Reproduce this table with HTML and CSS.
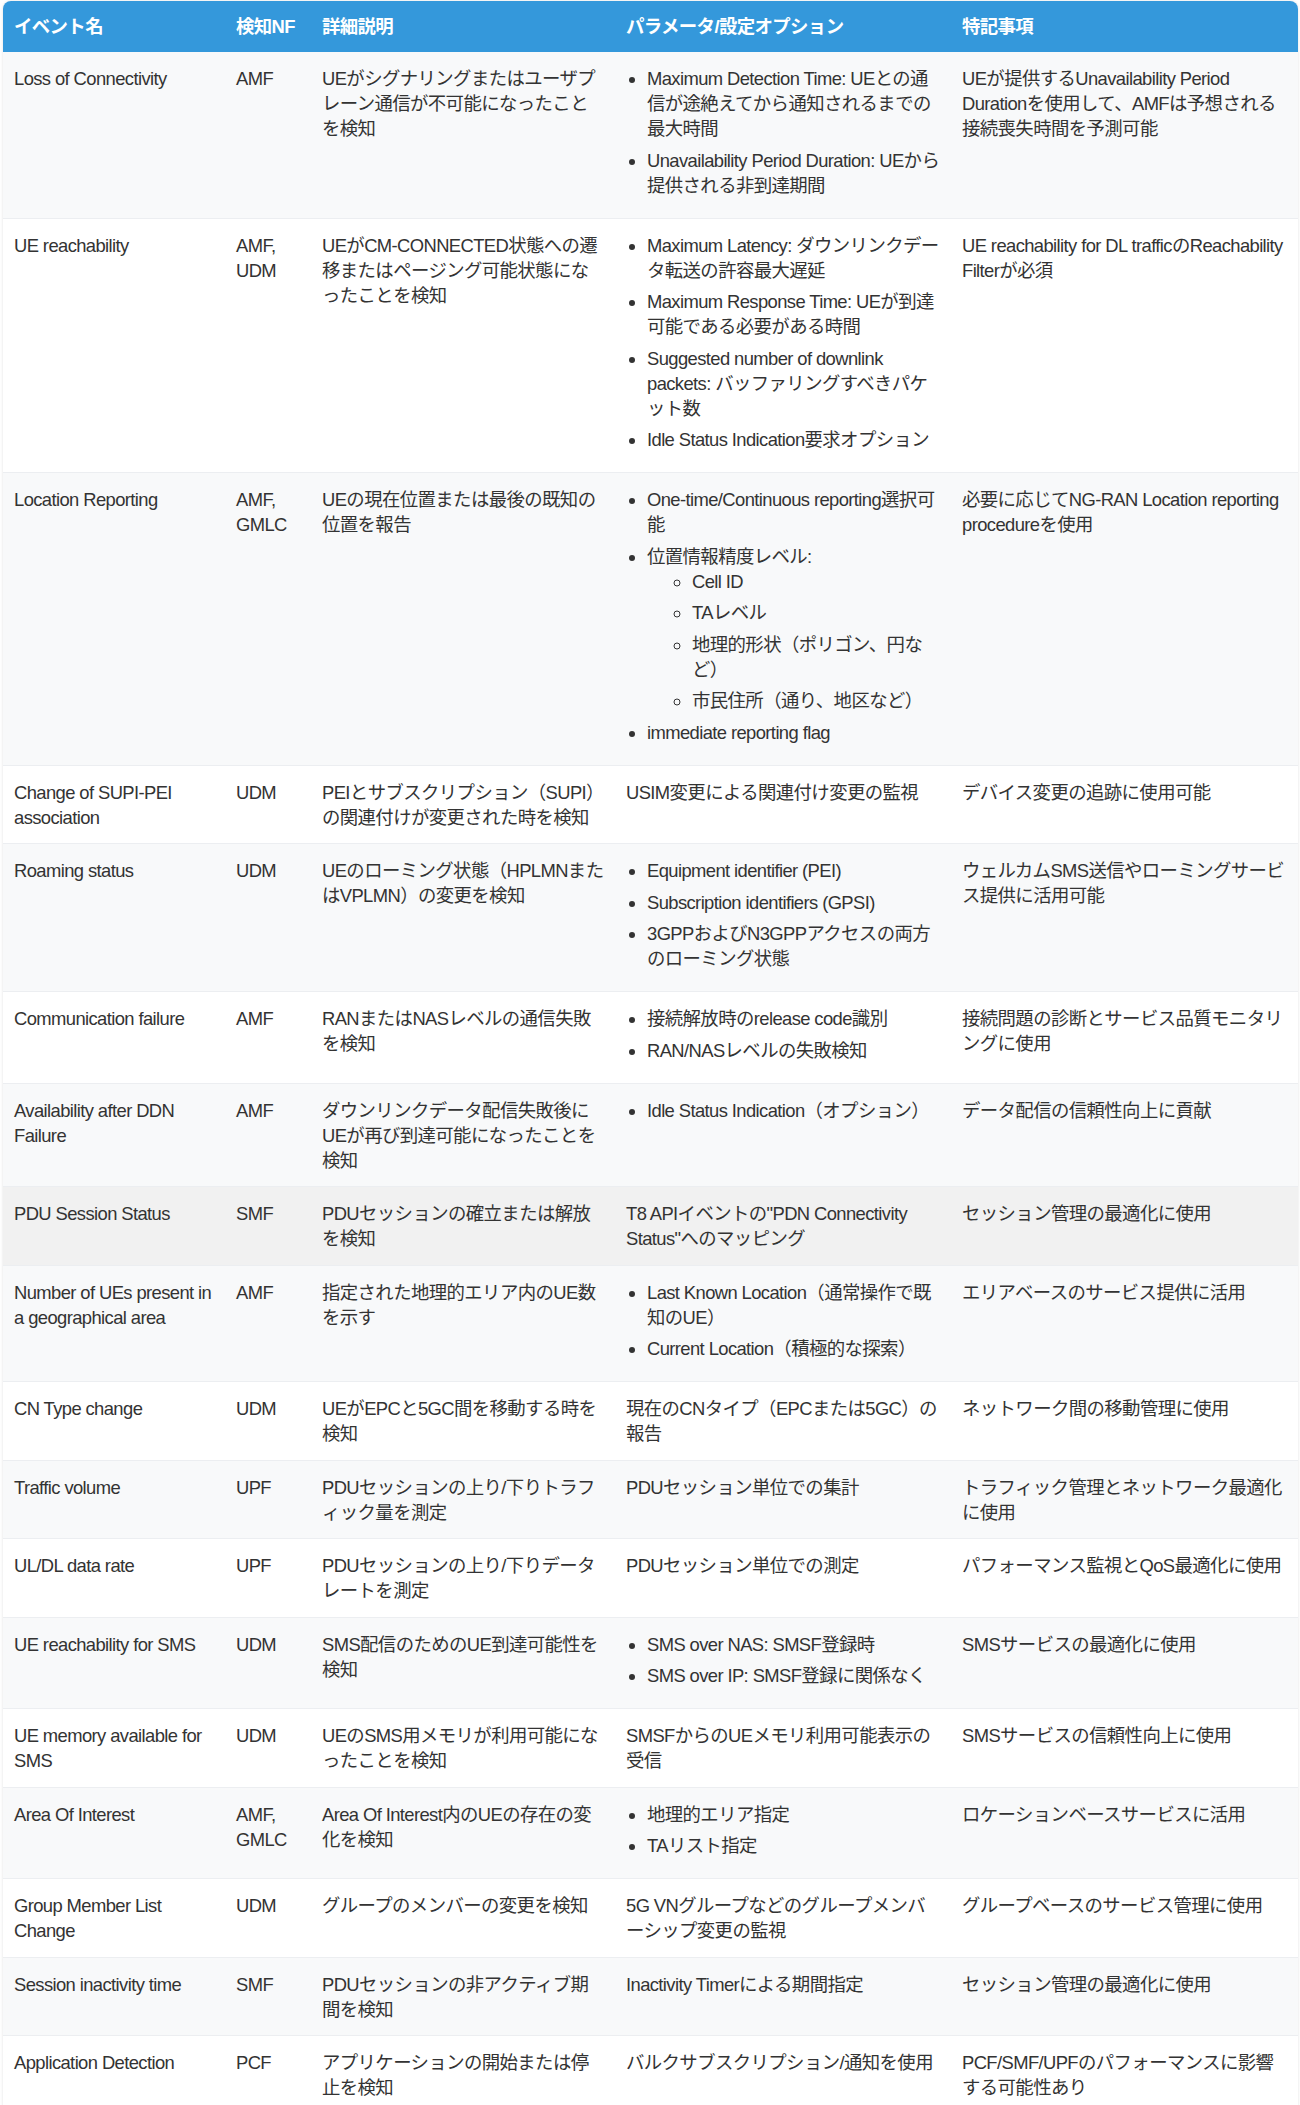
FILE: index.html
```html
<!DOCTYPE html>
<html lang="ja">
<head>
<meta charset="utf-8">
<title>イベント一覧</title>
<link rel="stylesheet" href="styles.css">
</head>
<body>
<div class="wrap">
<table class="events">
<colgroup>
<col class="c-name"><col class="c-nf"><col class="c-desc"><col class="c-param"><col class="c-note">
</colgroup>
<thead>
<tr><th>イベント名</th><th>検知NF</th><th>詳細説明</th><th>パラメータ/設定オプション</th><th>特記事項</th></tr>
</thead>
<tbody>
<tr>
<td>Loss of Connectivity</td><td>AMF</td><td>UEがシグナリングまたはユーザプレーン通信が不可能になったことを検知</td>
<td><ul class="list"><li>Maximum Detection Time: UEとの通信が途絶えてから通知されるまでの最大時間</li><li>Unavailability Period Duration: UEから提供される非到達期間</li></ul></td>
<td>UEが提供するUnavailability Period Durationを使用して、AMFは予想される接続喪失時間を予測可能</td>
</tr>
<tr>
<td>UE reachability</td><td>AMF, UDM</td><td>UEがCM-CONNECTED状態への遷移またはページング可能状態になったことを検知</td>
<td><ul class="list"><li>Maximum Latency: ダウンリンクデータ転送の許容最大遅延</li><li>Maximum Response Time: UEが到達可能である必要がある時間</li><li>Suggested number of downlink packets: バッファリングすべきパケット数</li><li>Idle Status Indication要求オプション</li></ul></td>
<td>UE reachability for DL trafficのReachability Filterが必須</td>
</tr>
<tr>
<td>Location Reporting</td><td>AMF, GMLC</td><td>UEの現在位置または最後の既知の位置を報告</td>
<td><ul class="list"><li>One-time/Continuous reporting選択可能</li><li>位置情報精度レベル:<ul class="sublist"><li>Cell ID</li><li>TAレベル</li><li>地理的形状（ポリゴン、円など）</li><li>市民住所（通り、地区など）</li></ul></li><li>immediate reporting flag</li></ul></td>
<td>必要に応じてNG-RAN Location reporting procedureを使用</td>
</tr>
<tr>
<td>Change of SUPI-PEI association</td><td>UDM</td><td>PEIとサブスクリプション（SUPI）の関連付けが変更された時を検知</td>
<td>USIM変更による関連付け変更の監視</td>
<td>デバイス変更の追跡に使用可能</td>
</tr>
<tr>
<td>Roaming status</td><td>UDM</td><td>UEのローミング状態（HPLMNまたはVPLMN）の変更を検知</td>
<td><ul class="list"><li>Equipment identifier (PEI)</li><li>Subscription identifiers (GPSI)</li><li>3GPPおよびN3GPPアクセスの両方のローミング状態</li></ul></td>
<td>ウェルカムSMS送信やローミングサービス提供に活用可能</td>
</tr>
<tr>
<td>Communication failure</td><td>AMF</td><td>RANまたはNASレベルの通信失敗を検知</td>
<td><ul class="list"><li>接続解放時のrelease code識別</li><li>RAN/NASレベルの失敗検知</li></ul></td>
<td>接続問題の診断とサービス品質モニタリングに使用</td>
</tr>
<tr>
<td>Availability after DDN Failure</td><td>AMF</td><td>ダウンリンクデータ配信失敗後にUEが再び到達可能になったことを検知</td>
<td><ul class="list"><li>Idle Status Indication（オプション）</li></ul></td>
<td>データ配信の信頼性向上に貢献</td>
</tr>
<tr class="is-hover">
<td>PDU Session Status</td><td>SMF</td><td>PDUセッションの確立または解放を検知</td>
<td>T8 APIイベントの"PDN Connectivity Status"へのマッピング</td>
<td>セッション管理の最適化に使用</td>
</tr>
<tr>
<td>Number of UEs present in a geographical area</td><td>AMF</td><td>指定された地理的エリア内のUE数を示す</td>
<td><ul class="list"><li>Last Known Location（通常操作で既知のUE）</li><li>Current Location（積極的な探索）</li></ul></td>
<td>エリアベースのサービス提供に活用</td>
</tr>
<tr>
<td>CN Type change</td><td>UDM</td><td>UEがEPCと5GC間を移動する時を検知</td>
<td>現在のCNタイプ（EPCまたは5GC）の報告</td>
<td>ネットワーク間の移動管理に使用</td>
</tr>
<tr>
<td>Traffic volume</td><td>UPF</td><td>PDUセッションの上り/下りトラフィック量を測定</td>
<td>PDUセッション単位での集計</td>
<td>トラフィック管理とネットワーク最適化に使用</td>
</tr>
<tr>
<td>UL/DL data rate</td><td>UPF</td><td>PDUセッションの上り/下りデータレートを測定</td>
<td>PDUセッション単位での測定</td>
<td>パフォーマンス監視とQoS最適化に使用</td>
</tr>
<tr>
<td>UE reachability for SMS</td><td>UDM</td><td>SMS配信のためのUE到達可能性を検知</td>
<td><ul class="list"><li>SMS over NAS: SMSF登録時</li><li>SMS over IP: SMSF登録に関係なく</li></ul></td>
<td>SMSサービスの最適化に使用</td>
</tr>
<tr>
<td>UE memory available for SMS</td><td>UDM</td><td>UEのSMS用メモリが利用可能になったことを検知</td>
<td>SMSFからのUEメモリ利用可能表示の受信</td>
<td>SMSサービスの信頼性向上に使用</td>
</tr>
<tr>
<td>Area Of Interest</td><td>AMF, GMLC</td><td>Area Of Interest内のUEの存在の変化を検知</td>
<td><ul class="list"><li>地理的エリア指定</li><li>TAリスト指定</li></ul></td>
<td>ロケーションベースサービスに活用</td>
</tr>
<tr>
<td>Group Member List Change</td><td>UDM</td><td>グループのメンバーの変更を検知</td>
<td>5G VNグループなどのグループメンバーシップ変更の監視</td>
<td>グループベースのサービス管理に使用</td>
</tr>
<tr>
<td>Session inactivity time</td><td>SMF</td><td>PDUセッションの非アクティブ期間を検知</td>
<td>Inactivity Timerによる期間指定</td>
<td>セッション管理の最適化に使用</td>
</tr>
<tr>
<td>Application Detection</td><td>PCF</td><td>アプリケーションの開始または停止を検知</td>
<td>バルクサブスクリプション/通知を使用</td>
<td>PCF/SMF/UPFのパフォーマンスに影響する可能性あり</td>
</tr>
</tbody>
</table>
</div>
</body>
</html>
```
FILE: styles.css
```css
html, body {
  margin: 0;
  padding: 0;
  background: #ffffff;
}

body {
  font-family: "Liberation Sans", "Noto Sans CJK JP", sans-serif;
  font-size: 18.4px;
  letter-spacing: -0.6px;
  line-height: 25px;
  color: #333333;
}

.wrap {
  width: 1295px;
  margin: 1px 0 0 3px;
  border-radius: 8px 8px 0 0;
  overflow: hidden;
  box-shadow: 0 0 3px rgba(0, 0, 0, 0.12);
}

.events {
  width: 100%;
  border-collapse: collapse;
  table-layout: fixed;
}

.c-name { width: 222px; }
.c-nf { width: 86px; }
.c-desc { width: 304px; }
.c-param { width: 336px; }
.c-note { width: 347px; }

.events th {
  background: #3498db;
  color: #ffffff;
  font-weight: bold;
  text-align: left;
  padding: 13px 11px;
}

.events td {
  padding: 14px 11px 13.5px;
  vertical-align: top;
  text-align: left;
  border-bottom: 1px solid #eceef1;
}

.events tbody tr:nth-child(odd) {
  background: #f8f9fa;
}

.events tbody tr:nth-child(even) {
  background: #ffffff;
}

.events tbody tr.is-hover {
  background: #f1f1f1;
}

.list {
  margin: 0;
  padding-left: 21px;
  list-style: disc;
}

.list li {
  margin-bottom: 6.5px;
}

.sublist {
  margin: 0;
  padding-left: 45px;
  list-style: circle;
}
```
